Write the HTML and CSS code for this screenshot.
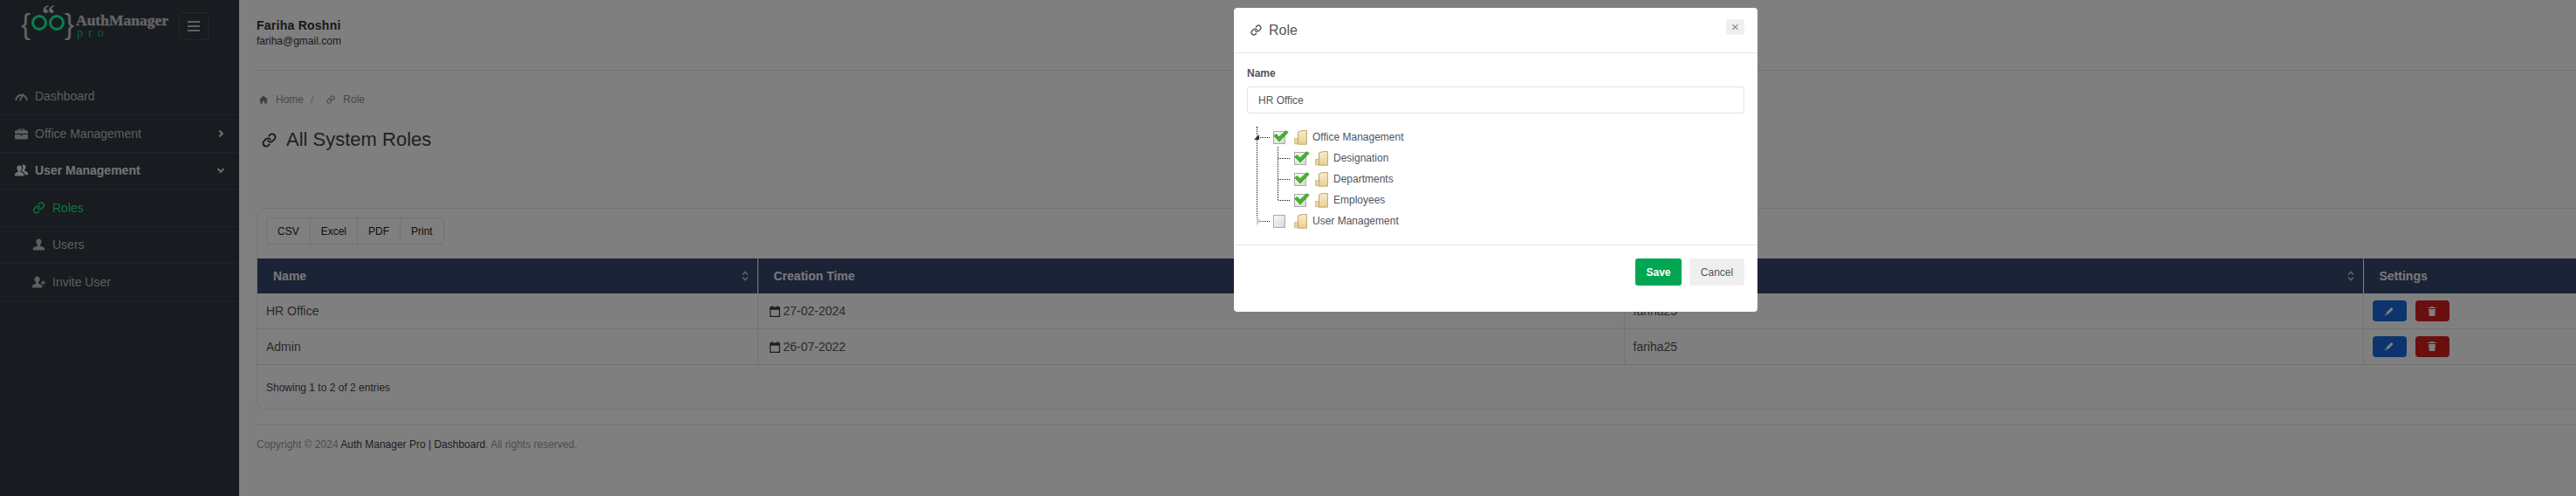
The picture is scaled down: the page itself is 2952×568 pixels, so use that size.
FILE: index.html
```html
<!DOCTYPE html>
<html lang="en">
<head>
<meta charset="utf-8">
<title>Auth Manager Pro - Role</title>
<link rel="stylesheet" href="styles.css">
</head>
<body>
<svg class="defs" width="0" height="0" aria-hidden="true">
  <defs><linearGradient id="fold" x1="0" y1="0" x2="0" y2="1"><stop offset="0" stop-color="#f8eecb"/><stop offset="1" stop-color="#e6cf95"/></linearGradient></defs>
  <symbol id="i-link" viewBox="0 0 24 24"><path fill="none" stroke="currentColor" stroke-width="2.6" stroke-linecap="round" d="M10 13a5 5 0 0 0 7.54.54l3-3a5 5 0 0 0-7.07-7.07l-1.72 1.71M14 11a5 5 0 0 0-7.54-.54l-3 3a5 5 0 0 0 7.07 7.07l1.71-1.71"/></symbol>
  <symbol id="i-gauge" viewBox="0 0 16 12"><path fill="none" stroke="currentColor" stroke-width="2.200" d="M1.200 11.500A6.800 6.800 0 0 1 14.800 11.500"/><path fill="currentColor" d="M5 11.500 9.600 2.800l1.200.6-3.300 8.100z"/></symbol>
  <symbol id="i-case" viewBox="0 0 16 14"><path fill="currentColor" d="M5 1h6l1 1v1h3l1 1v3H0V4l1-1h3V2zM6 2v1h4V2zM0 8h7v1.500h2V8h7v5l-1 1H1l-1-1z"/></symbol>
  <symbol id="i-users" viewBox="0 0 16 14"><path fill="currentColor" d="M5.500 1a3 3 0 0 1 3 3c0 1.500-.7 3-1.500 3.500v1L11 11v3H0v-3l4-2.500v-1C3.200 7 2.500 5.500 2.500 4a3 3 0 0 1 3-3zM10.500 0a2.800 2.800 0 0 1 2.800 3c0 1.500-.6 2.800-1.400 3.300v1L16 10v2.500h-4V10.500L8.500 8V7c.8-1 1.300-2 1.300-3.500 0-1.200-.5-2.200-1.200-2.800.5-.4 1.200-.7 1.900-.7z"/></symbol>
  <symbol id="i-user" viewBox="0 0 16 14"><path fill="currentColor" d="M8 0c2 0 3.300 1.400 3.300 3.500 0 1.700-.8 3.300-1.800 4v1L15 11v3H1v-3l5.500-2.500v-1C5.500 6.800 4.700 5.200 4.700 3.500 4.700 1.400 6 0 8 0z"/></symbol>
  <symbol id="i-invite" viewBox="0 0 16 14"><path fill="currentColor" d="M6 0c2 0 3.300 1.400 3.300 3.500 0 1.700-.8 3.300-1.800 4v1L12 11v3H0v-3l4.500-2.500v-1C3.500 6.800 2.700 5.200 2.700 3.500 2.700 1.400 4 0 6 0zM12.500 5h1.500v2h2v1.500h-2v2h-1.500v-2h-2V7h2z"/></symbol>
  <symbol id="i-home" viewBox="0 0 12 11"><path fill="currentColor" d="M6 0l6 5.500-.8.800L10.500 5.700V11H7.300V7.500H4.700V11H1.500V5.700L.8 6.300 0 5.500z"/></symbol>
  <symbol id="i-cal" viewBox="0 0 13 14"><path fill="currentColor" d="M2.500 0h1.500v1.500h5V0h1.500v1.500H13V14H0V1.500h2.500zM1.300 5v7.700h10.400V5z"/></symbol>
  <symbol id="i-pen" viewBox="0 0 12 12"><path fill="currentColor" d="M9 0.500l2.500 2.500L4 10.500 1.500 8zM1 9l2 2-3 1z"/></symbol>
  <symbol id="i-trash" viewBox="0 0 10 12"><path fill="currentColor" d="M3.500 0h3l.5 1h3v1.300H0V1h3zM.8 3.200h8.400L8.500 12h-7z"/></symbol>
  <symbol id="i-sort" viewBox="0 0 8 12"><path fill="none" stroke="currentColor" stroke-width="1.700" d="M1 4.500 4 1.500l3 3M1 7.500l3 3 3-3"/></symbol>
  <symbol id="i-folder" viewBox="0 0 15 17"><path fill="#e9d5a0" stroke="#cdb277" stroke-width=".8" d="M.5 9.500h4.500v6.300H.5z"/><path fill="url(#fold)" stroke="#c4a565" stroke-width="1" d="M4.500 2 9 .6h5.400v15.600H4.500z"/></symbol>
  <symbol id="i-check" viewBox="0 0 18 14"><path fill="#45b52a" stroke="#2b8e17" stroke-width=".7" d="M.8 6.500 3.500 4.600l3.300 3.200L14.500.8l2.700 1.600L7 13z"/></symbol>
</svg>

<div class="app">
  <aside class="sidebar">
    <div class="brand">
      <div class="logo">
        <span class="brace">{</span>
        <span class="eyes"><span class="quote">“</span><span class="eye"></span><span class="eye"></span></span>
        <span class="brace">}</span>
        <span class="wordmark"><span class="word">AuthManager</span><span class="pro">pro</span></span>
      </div>
      <button class="burger" type="button" aria-label="Menu"><span></span><span></span><span></span></button>
    </div>
    <nav class="nav">
      <a class="nav-item"><svg class="nav-icon"><use href="#i-gauge"/></svg>Dashboard</a>
      <a class="nav-item"><svg class="nav-icon"><use href="#i-case"/></svg>Office Management<span class="caret caret-right"></span></a>
      <a class="nav-item nav-open"><svg class="nav-icon"><use href="#i-users"/></svg>User Management<span class="caret caret-down"></span></a>
      <a class="nav-item nav-sub nav-active"><svg class="nav-icon"><use href="#i-link"/></svg>Roles</a>
      <a class="nav-item nav-sub"><svg class="nav-icon"><use href="#i-user"/></svg>Users</a>
      <a class="nav-item nav-sub"><svg class="nav-icon"><use href="#i-invite"/></svg>Invite User</a>
    </nav>
  </aside>

  <main class="main">
    <header class="topbar">
      <div class="user-name">Fariha Roshni</div>
      <div class="user-mail">fariha@gmail.com</div>
    </header>
    <div class="crumbs">
      <svg class="crumb-icon"><use href="#i-home"/></svg><span>Home</span><span class="crumb-sep">/</span>
      <svg class="crumb-link"><use href="#i-link"/></svg><span>Role</span>
    </div>
    <h1 class="page-title"><svg class="title-icon"><use href="#i-link"/></svg>All System Roles</h1>

    <section class="card">
      <div class="exports">
        <button class="export" type="button">CSV</button><button class="export" type="button">Excel</button><button class="export" type="button">PDF</button><button class="export" type="button">Print</button>
      </div>
      <table class="roles">
        <colgroup><col class="c-name"><col class="c-time"><col class="c-by"><col class="c-set"></colgroup>
        <thead>
          <tr>
            <th><div class="th-in">Name<svg class="sort"><use href="#i-sort"/></svg></div></th>
            <th><div class="th-in">Creation Time<svg class="sort"><use href="#i-sort"/></svg></div></th>
            <th><div class="th-in">Created By<svg class="sort"><use href="#i-sort"/></svg></div></th>
            <th><div class="th-in">Settings</div></th>
          </tr>
        </thead>
        <tbody>
          <tr>
            <td>HR Office</td>
            <td><svg class="cal"><use href="#i-cal"/></svg>27-02-2024</td>
            <td>fariha25</td>
            <td><div class="acts"><button class="act act-edit" type="button"><svg><use href="#i-pen"/></svg></button><button class="act act-del" type="button"><svg><use href="#i-trash"/></svg></button></div></td>
          </tr>
          <tr>
            <td>Admin</td>
            <td><svg class="cal"><use href="#i-cal"/></svg>26-07-2022</td>
            <td>fariha25</td>
            <td><div class="acts"><button class="act act-edit" type="button"><svg><use href="#i-pen"/></svg></button><button class="act act-del" type="button"><svg><use href="#i-trash"/></svg></button></div></td>
          </tr>
        </tbody>
      </table>
      <div class="info">Showing 1 to 2 of 2 entries</div>
    </section>

    <footer class="foot">Copyright © 2024 <span class="foot-link">Auth Manager Pro | Dashboard</span>. All rights reserved.</footer>
  </main>
</div>

<div class="backdrop">
  <div class="modal">
    <div class="modal-head">
      <svg class="modal-icon"><use href="#i-link"/></svg><span class="modal-title">Role</span>
      <button class="close" type="button" aria-label="Close">×</button>
    </div>
    <div class="modal-body">
      <label class="field-label">Name</label>
      <input class="field" type="text" value="HR Office">
      <ul class="tree">
        <li class="node node-open">
          <div class="row"><span class="chk on"><svg><use href="#i-check"/></svg></span><svg class="folder"><use href="#i-folder"/></svg>Office Management</div>
          <ul class="sub">
            <li class="row child"><span class="chk on"><svg><use href="#i-check"/></svg></span><svg class="folder"><use href="#i-folder"/></svg>Designation</li>
            <li class="row child"><span class="chk on"><svg><use href="#i-check"/></svg></span><svg class="folder"><use href="#i-folder"/></svg>Departments</li>
            <li class="row child"><span class="chk on"><svg><use href="#i-check"/></svg></span><svg class="folder"><use href="#i-folder"/></svg>Employees</li>
          </ul>
        </li>
        <li class="node node-closed">
          <div class="row"><span class="chk"></span><svg class="folder"><use href="#i-folder"/></svg>User Management</div>
        </li>
      </ul>
    </div>
    <div class="modal-foot">
      <button class="btn btn-save" type="button">Save</button>
      <button class="btn btn-cancel" type="button">Cancel</button>
    </div>
  </div>
</div>
</body>
</html>
```
FILE: styles.css
```css
* { box-sizing: border-box; }
html, body { margin: 0; height: 568px; overflow: hidden; }
body { font-family: "Liberation Sans", Arial, sans-serif; font-size: 14px; color: #495057; background: #fff; }
.defs { position: absolute; }
button { font-family: inherit; }
ul { list-style: none; margin: 0; padding: 0; }

.app { display: flex; height: 568px; width: 2952px; }

/* sidebar */
.sidebar { width: 274px; flex: none; background: #30363f; color: #d2d2d2; }
.brand { height: 89.500px; display: flex; align-items: flex-start; padding: 14px 0 0 24px; }
.logo { display: flex; align-items: flex-start; width: 181px; height: 40px; }
.brace { font: 400 33px/31px "Liberation Sans", sans-serif; color: #c8c8c8; width: 10px; margin-top: -2px; }
.eyes { position: relative; display: flex; gap: 2px; width: 40px; padding: 3px 0 0 1px; justify-content: center; }
.eye { width: 18px; height: 18px; border: 3px solid #15ff9e; border-radius: 50%; }
.quote { position: absolute; left: 14px; top: -13px; font: 700 30px/30px "Liberation Serif", serif; color: #c8c8c8; }
.wordmark { display: flex; flex-direction: column; margin-left: 3px; }
.word { font: 700 17.500px/18px "Liberation Serif", serif; color: #c8c8c8; white-space: nowrap; -webkit-text-stroke: .4px #c8c8c8; }
.pro { font: 400 14px/12px "Liberation Serif", serif; color: #0fc27a; letter-spacing: 6px; padding-left: 1px; }
.burger { width: 34px; height: 32px; background: transparent; border: 1px solid #4a4e56; border-radius: 3px; padding: 0; display: flex; flex-direction: column; gap: 3px; align-items: center; justify-content: center; }
.burger span { width: 14px; height: 2px; background: #c0c0c0; }
.nav { display: flex; flex-direction: column; }
.nav-item { height: 42.500px; display: flex; align-items: center; padding-left: 17px; border-bottom: 1px solid #3f454f; color: #bdbdbd; font-size: 14px; position: relative; }
.nav-icon { width: 15px; height: 14px; margin-right: 8px; flex: none; }
.nav-open { font-weight: 700; color: #e8e8e8; }
.nav-sub { padding-left: 37px; }
.nav-active { color: #19e57f; }
.caret { position: absolute; left: 249px; top: 50%; width: 6px; height: 6px; border-right: 2px solid #e0e0e0; border-bottom: 2px solid #e0e0e0; }
.caret-right { transform: translateY(-50%) rotate(-45deg); }
.caret-down { transform: translateY(-70%) rotate(45deg); left: 250px; }

/* main */
.main { flex: 1; min-width: 0; padding-left: 20px; }
.topbar { height: 81px; padding-top: 21px; border-bottom: 1px solid #e6e6e6; }
.user-name { font-size: 14px; line-height: 16px; font-weight: 700; color: #2d3039; letter-spacing: .25px; }
.user-mail { font-size: 12px; line-height: 16px; margin-top: 2px; color: #333; }
.crumbs { display: flex; align-items: center; height: 16px; margin-top: 25px; padding-left: 3px; font-size: 12px; color: #8b8f94; }
.crumb-icon { width: 10px; height: 10px; color: #7a7a7a; margin-right: 9px; }
.crumb-sep { margin: 0 15px 0 8px; color: #b5b5b5; }
.crumb-link { width: 10px; height: 10px; margin-right: 9px; }
.page-title { display: flex; align-items: center; height: 26px; margin: 25px 0 0; padding-left: 6px; font-size: 22px; font-weight: 400; color: #3f434a; }
.title-icon { width: 17px; height: 17px; margin-right: 11px; color: #333; }

.card { margin-top: 65px; border: 1px solid #e9e9e9; border-right: 0; border-radius: 10px 0 0 10px; height: 231px; }
.exports { display: flex; margin: 10px 0 0 10px; width: max-content; height: 31px; border: 1px solid #e4e4e4; border-radius: 4px; }
.export { background: transparent; border: 0; border-right: 1px solid #e4e4e4; padding: 0 12px; font-size: 12px; color: #222; }
.export:last-child { border-right: 0; }
.roles { margin-top: 16px; width: 2657px; table-layout: fixed; border-collapse: collapse; }
.c-name { width: 573px; } .c-time { width: 993px; } .c-by { width: 847px; } .c-set { width: 244px; }
.roles th { height: 40px; padding: 0; background: #36466f; color: #f2f2f2; text-align: left; font-size: 14px; font-weight: 700; border-right: 1px solid #fff; }
.roles th:last-child { border-right: 0; }
.th-in { display: flex; align-items: center; justify-content: space-between; padding: 0 10px 0 18px; }
.sort { width: 8px; height: 12px; color: #bfc4cc; }
.roles td { height: 40.500px; padding: 0 10px; font-size: 14px; color: #555; border-right: 1px solid #e6e6e6; border-bottom: 1px solid #e3e3e3; }
.roles td:nth-child(2) { padding-left: 13px; }
.roles td:nth-child(4) { padding-left: 10px; border-right: 0; }
.cal { width: 12px; height: 13px; color: #3d3d3d; margin-right: 4px; vertical-align: -2px; }
.acts { display: flex; gap: 10px; }
.act { width: 39px; height: 24px; border: 0; border-radius: 4px; padding: 0; display: flex; align-items: center; justify-content: center; color: #fff; }
.act svg { width: 10px; height: 11px; }
.act-edit { background: #1c68de; }
.act-del { background: #d3201f; }
.info { padding: 19px 0 0 10px; font-size: 12px; line-height: 14px; color: #444; }
.foot { margin-top: 32px; font-size: 12px; line-height: 14px; color: #9a9a9a; }
.foot::before { content: ""; display: block; border-top: 1px solid #e8e8e8; margin: -15px 0 14px; height: 1px; }
.foot-link { color: #3c3c3c; }

/* modal */
.backdrop { position: fixed; inset: 0; background: rgba(0, 0, 0, .5); display: flex; align-items: flex-start; padding: 9px 0 0 1414px; }
.modal { width: 600px; height: 348px; background: #fff; border-radius: 4px; display: flex; flex-direction: column; }
.modal-head { height: 52px; flex: none; display: flex; align-items: center; padding: 0 15px 0 19px; border-bottom: 1px solid #e6e6e6; position: relative; }
.modal-icon { width: 13px; height: 13px; color: #555; margin-right: 8px; }
.modal-title { font-size: 16px; color: #555; }
.close { position: absolute; right: 15px; top: 13px; width: 21px; height: 18px; border: 0; border-radius: 2px; background: #efefef; color: #888; font-size: 15px; line-height: 16px; padding: 0; }
.modal-body { flex: 1; padding: 16px 15px 0; }
.field-label { display: block; font-size: 12px; line-height: 14px; font-weight: 700; color: #50555e; }
.field { display: block; width: 570px; height: 31px; margin-top: 8px; border: 1px solid #e5e5e5; border-radius: 3px; padding: 0 12px; font: 12px "Liberation Sans", sans-serif; color: #555; outline: 0; }
.tree { margin-top: 15px; margin-left: 11px; position: relative; width: 300px; padding-left: 19px; font-size: 12px; color: #50545e; }
.tree::before { content: ""; position: absolute; left: 0; top: 0; height: 110px; border-left: 1px dotted #111; }
.node { position: relative; }
.node::before { content: ""; position: absolute; left: -17px; top: 12px; width: 13px; border-top: 1px dotted #111; }
.node-open::after { content: ""; position: absolute; left: -22px; top: 9px; width: 0; height: 0; border-style: solid; border-width: 0 0 6px 6px; border-color: transparent transparent #333 transparent; }
.node-closed::after { content: ""; position: absolute; left: -19px; top: 7px; width: 0; height: 0; border-style: solid; border-width: 5px 0 5px 5px; border-color: transparent transparent transparent #ccc; }
.row { height: 24px; display: flex; align-items: center; white-space: nowrap; }
.sub { position: relative; padding-left: 24px; }
.sub::before { content: ""; position: absolute; left: 5px; top: -1px; height: 61px; border-left: 1px dotted #111; }
.child { position: relative; }
.child::before { content: ""; position: absolute; left: -18px; top: 12px; width: 13px; border-top: 1px dotted #111; }
.chk { position: relative; width: 14px; height: 15px; border: 1px solid #aaa; background: linear-gradient(135deg, #fafafa, #d8d8d8); margin-right: 10px; flex: none; }
.chk svg { position: absolute; left: -1px; top: -2px; width: 18px; height: 14px; }
.folder { width: 15px; height: 17px; margin-right: 6px; flex: none; }
.modal-foot { height: 77px; flex: none; border-top: 1px solid #e6e6e6; display: flex; justify-content: flex-end; gap: 9px; padding: 15px 15px 0 0; }
.btn { height: 31px; border: 0; border-radius: 3px; font-size: 12px; padding: 0; }
.btn-save { width: 53px; background: #00a651; color: #fff; font-weight: 700; }
.btn-cancel { width: 63px; background: #efefef; color: #555; }
```
